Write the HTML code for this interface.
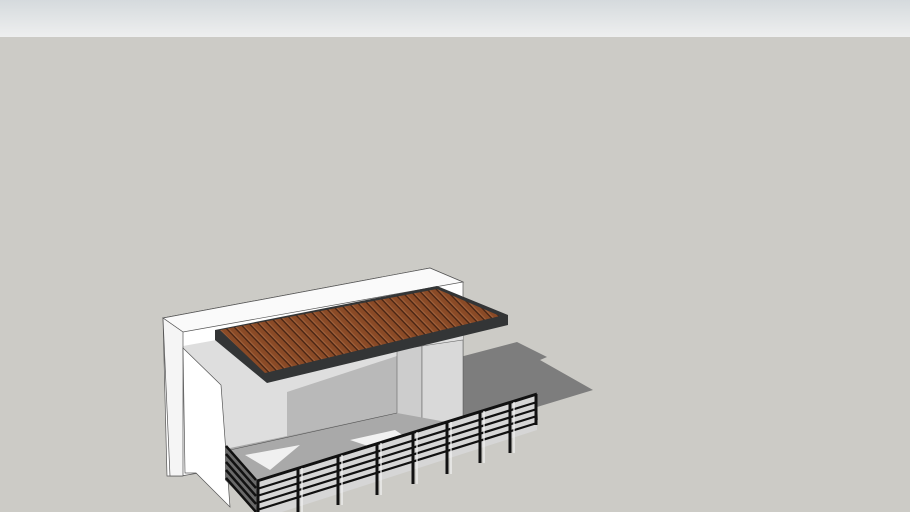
<!DOCTYPE html>
<html><head><meta charset="utf-8"><style>
html,body{margin:0;padding:0;width:910px;height:512px;overflow:hidden;background:#cccbc6}
svg{display:block}
</style></head><body>
<svg width="910" height="512" viewBox="0 0 910 512" xmlns="http://www.w3.org/2000/svg">
<defs>
<linearGradient id="sky" x1="0" y1="0" x2="0" y2="1">
<stop offset="0" stop-color="#d5dadd"/><stop offset="1" stop-color="#eeefef"/>
</linearGradient>
<pattern id="wood" patternUnits="userSpaceOnUse" width="6.6" height="10" patternTransform="rotate(-44)">
<rect width="6.6" height="10" fill="#8a4a26"/>
<rect x="0" width="1.4" height="10" fill="#4a2614"/>
<rect x="1.4" width="1.2" height="10" fill="#a0603a"/>
</pattern>
</defs>
<rect width="910" height="37" fill="url(#sky)"/>
<rect y="37" width="910" height="475" fill="#cccbc6"/>
<polygon points="460,357 517,342 547,357 540,360 593,390 537,407 538,420 463,420" fill="#7d7d7d"/>
<polygon points="163,318 430,268 463,282 463,428 181,476 167,476" fill="#ffffff" stroke="#555" stroke-width="0.7"/>
<polygon points="163,318 430,268 463,282 183,332" fill="#fafafa" stroke="#555" stroke-width="0.7"/>
<polygon points="183,346 463,296 463,428 300,470 240,470 185,446" fill="#dedede"/>
<polygon points="287,392 397,356 397,414 287,445" fill="#b9b9b9"/>
<polygon points="397,350 422,346 422,427 397,432" fill="#cdcdcd" stroke="#666" stroke-width="0.6"/>
<polygon points="422,346 463,340 463,425 422,430" fill="#d9d9d9" stroke="#666" stroke-width="0.6"/>
<polygon points="230,448 397,413 463,425 537,398 537,420 257,500 232,470" fill="#a9a9a9"/>
<polygon points="350,440 395,430 410,440 380,450" fill="#f2f2f2"/>
<polygon points="245,455 300,445 270,470" fill="#f0f0f0"/>
<line x1="230" y1="450" x2="397" y2="413" stroke="#555" stroke-width="0.6"/>
<polygon points="163,318 183,332 183,476 170,476" fill="#f5f5f5" stroke="#555" stroke-width="0.7"/>
<polygon points="183,348 221,385 230,507 196,473 185,473" fill="#ffffff" stroke="#555" stroke-width="0.7"/>
<polygon points="215,330 437,286 508,315 508,325 267,383 215,340" fill="#333536"/>
<polygon points="220,330 437,289 500,316 265,373" fill="url(#wood)"/>
<!-- side railing -->
<polygon points="225,445 257,480 257,512 225,480" fill="#6a6a6a"/>
<g stroke="#111" stroke-width="2.5">
<line x1="226" y1="446" x2="256" y2="480"/><line x1="226" y1="454" x2="256" y2="488"/><line x1="226" y1="462" x2="256" y2="496"/><line x1="226" y1="470" x2="256" y2="504"/><line x1="226" y1="478" x2="256" y2="512"/>
</g>
<!-- front railing -->
<polygon points="257,480 537,393 537,430 257,520" fill="#d6d6d6"/>
<g stroke="#111" stroke-width="2.2">
<line x1="257" y1="481" x2="537" y2="394" stroke-width="3"/>
<line x1="257" y1="489" x2="537" y2="402"/>
<line x1="257" y1="496" x2="537" y2="409"/>
<line x1="257" y1="503" x2="537" y2="416"/>
<line x1="257" y1="510" x2="537" y2="423"/>
</g>
<g stroke="#111" stroke-width="3">
<line x1="258" y1="480" x2="258" y2="512"/>
<line x1="298" y1="468" x2="298" y2="512"/>
<line x1="338" y1="455" x2="338" y2="505"/>
<line x1="377" y1="443" x2="377" y2="495"/>
<line x1="413" y1="432" x2="413" y2="484"/>
<line x1="447" y1="422" x2="447" y2="474"/>
<line x1="480" y1="411" x2="480" y2="463"/>
<line x1="510" y1="402" x2="510" y2="453"/>
<line x1="536" y1="394" x2="536" y2="425"/>
</g>
<g stroke="#f5f5f5" stroke-width="1.2">
<line x1="302" y1="468" x2="302" y2="512"/>
<line x1="342" y1="455" x2="342" y2="505"/>
<line x1="381" y1="443" x2="381" y2="495"/>
<line x1="417" y1="432" x2="417" y2="484"/>
<line x1="451" y1="422" x2="451" y2="474"/>
<line x1="484" y1="411" x2="484" y2="463"/>
<line x1="514" y1="402" x2="514" y2="453"/>
</g>
</svg>
</body></html>
